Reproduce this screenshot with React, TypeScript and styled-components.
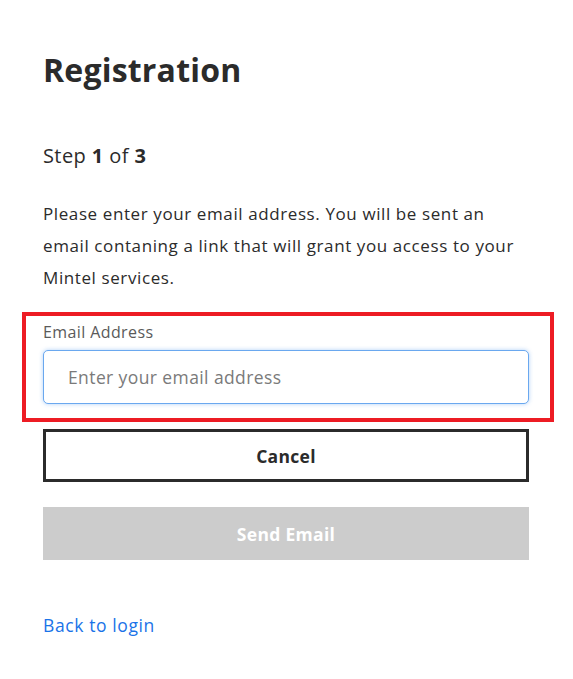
import { ReactElement } from 'react';
import styled, { createGlobalStyle } from 'styled-components';

const GlobalStyle = createGlobalStyle`
  html, body {
    margin: 0;
    padding: 0;
    background: #ffffff;
  }
  body {
    font-family: 'Open Sans', 'Noto Sans', sans-serif;
    color: #2b2b2b;
  }
`;

const Page = styled.main`
  width: 573px;
  box-sizing: border-box;
  padding: 50px 44px 40px 43px;
  display: flex;
  flex-direction: column;
`;

const Title = styled.h1`
  margin: 0;
  font-size: 32px;
  line-height: 40px;
  font-weight: 700;
  letter-spacing: 0.2px;
  color: #2b2b2b;
`;

const StepLine = styled.p`
  margin: 53px 0 0;
  font-size: 20px;
  line-height: 26px;
  font-weight: 400;
  letter-spacing: 0.4px;

  & b {
    font-weight: 700;
  }
`;

const Intro = styled.p`
  margin: 29px 0 0;
  font-size: 17px;
  line-height: 32px;
  letter-spacing: 0.6px;
  color: #2b2b2b;
`;

const Highlight = styled.div`
  margin: 18px -25px 0 -21px;
  padding: 6px 21px 14px 17px;
  border: 4px solid #ed1c24;
  display: flex;
  flex-direction: column;
  gap: 8px;
`;

const Label = styled.label`
  font-size: 16px;
  line-height: 20px;
  letter-spacing: 0.4px;
  color: #5a5a5a;
`;

const EmailInput = styled.input`
  box-sizing: border-box;
  width: 100%;
  height: 54px;
  padding: 0 24px;
  border: 1px solid #6aa8ef;
  border-radius: 5px;
  box-shadow: 0 0 4px rgba(80, 150, 240, 0.45);
  font-family: inherit;
  font-size: 17.5px;
  letter-spacing: 0.4px;
  color: #2b2b2b;
  caret-color: #2b2b2b;
  outline: none;

  &::placeholder {
    color: #7a7a7a;
  }
`;

const Button = styled.button<{ $variant: 'outline' | 'disabled' }>`
  box-sizing: border-box;
  width: 100%;
  height: 53px;
  font-family: inherit;
  font-size: 17.5px;
  font-weight: 700;
  letter-spacing: 0.3px;
  cursor: pointer;
  border: ${({ $variant }) =>
    $variant === 'outline' ? '3px solid #2b2b2b' : 'none'};
  background: ${({ $variant }) =>
    $variant === 'outline' ? '#ffffff' : '#cccccc'};
  color: ${({ $variant }) => ($variant === 'outline' ? '#2b2b2b' : '#ffffff')};

  &:disabled {
    cursor: default;
    color: #ffffff;
  }
`;

const Actions = styled.div`
  margin-top: 7px;
  display: flex;
  flex-direction: column;
  gap: 25px;
`;

const BackLink = styled.a`
  margin-top: 53px;
  font-size: 17.5px;
  line-height: 24px;
  letter-spacing: 0.6px;
  color: #1a73e8;
  text-decoration: none;
`;

const App = (): ReactElement => (
  <>
    <GlobalStyle />
    <Page>
      <Title>Registration</Title>
      <StepLine>
        Step <b>1</b> of <b>3</b>
      </StepLine>
      <Intro>
        Please enter your email address. You will be sent an email contaning a
        link that will grant you access to your Mintel services.
      </Intro>
      <Highlight>
        <Label htmlFor="email">Email Address</Label>
        <EmailInput
          id="email"
          type="email"
          placeholder="Enter your email address"
          autoFocus
        />
      </Highlight>
      <Actions>
        <Button $variant="outline">Cancel</Button>
        <Button $variant="disabled" disabled>
          Send Email
        </Button>
      </Actions>
      <BackLink href="#">Back to login</BackLink>
    </Page>
  </>
);

export default App;
